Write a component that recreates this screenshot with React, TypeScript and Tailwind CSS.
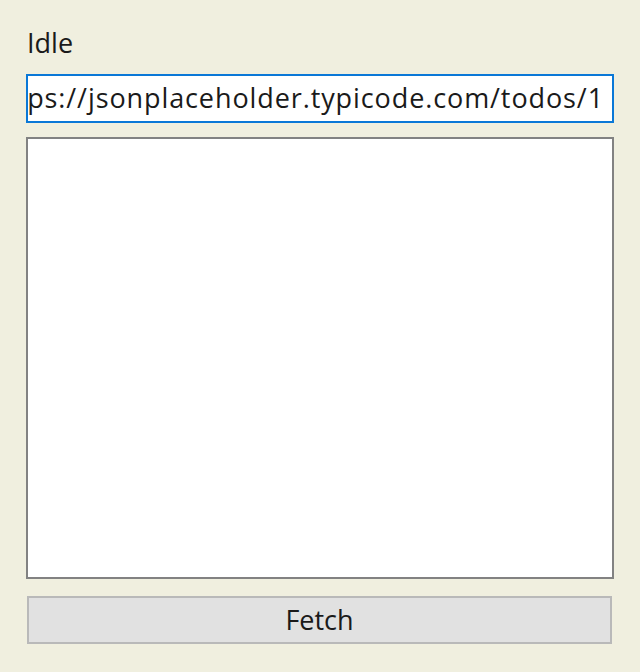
export default function App() {
  const url = "https://jsonplaceholder.typicode.com/todos/1";
  return (
    <div className="h-[672px] w-[640px] bg-[#f0efdf] px-[26px] pt-[27px] font-['Open_Sans',sans-serif] text-[#1a1a1a]">
      <div className="text-[27px] leading-[32px] pl-[1px]">Idle</div>
      <div className="mt-[15px] flex h-[49px] items-center justify-end overflow-hidden whitespace-nowrap border-2 border-[#0a78d7] bg-white pr-[8px] text-[27px] tracking-[0.9px]">
        <span>{url}</span>
      </div>
      <div className="mt-[14px] h-[442px] border-2 border-[#828282] bg-white" />
      <button
        type="button"
        className="mt-[17px] ml-[1px] flex h-[48px] w-[585px] items-center justify-center border-2 border-[#b9b9b9] bg-[#e1e1e1] text-[27px] text-[#1a1a1a]"
      >
        Fetch
      </button>
    </div>
  );
}
